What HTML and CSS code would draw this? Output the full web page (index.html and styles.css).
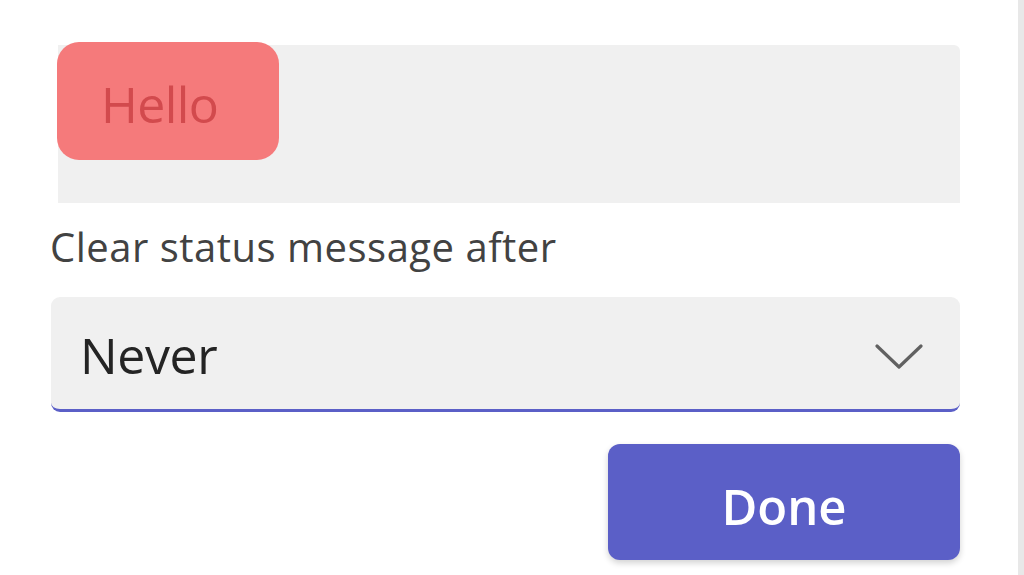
FILE: index.html
```html
<!DOCTYPE html>
<html lang="en">
<head>
<meta charset="utf-8">
<title>Status message</title>
<link rel="stylesheet" href="styles.css">
</head>
<body>
<div class="panel">
  <div class="content">
    <div class="message">
      <div class="highlight">Hello</div>
    </div>
    <div class="label">Clear status message after</div>
    <div class="select">
      <span class="select-value">Never</span>
      <svg class="chevron" width="48" height="26" viewBox="0 0 48 26"><path d="M2 2 L24 23 L46 2" fill="none" stroke="#616161" stroke-width="3.2" stroke-linecap="round" stroke-linejoin="round"/></svg>
    </div>
    <button class="done">Done</button>
  </div>
</div>
</body>
</html>
```
FILE: styles.css
```css
html, body {
  margin: 0;
  padding: 0;
  background: #ffffff;
  font-family: "Open Sans", "Noto Sans", sans-serif;
}
.panel {
  width: 1018px;
  height: 575px;
  border-right: 6px solid #e8e8e8;
  box-sizing: content-box;
  overflow: hidden;
}
.content {
  display: flex;
  flex-direction: column;
  padding: 45px 58px 0 51px;
  width: 909px;
}
.message {
  position: relative;
  margin-left: 7px;
  height: 158px;
  background: #f0f0f0;
  border-radius: 0 6px 0 0;
}
.highlight {
  position: absolute;
  left: -1px;
  top: -3px;
  width: 222px;
  height: 118px;
  box-sizing: border-box;
  padding: 6px 0 0 44px;
  display: flex;
  align-items: center;
  background: #f57a7b;
  border-radius: 22px;
  color: #d24a4d;
  font-size: 50px;
  letter-spacing: -0.6px;
}
.label {
  margin-top: 19px;
  margin-left: -1px;
  color: #424242;
  font-size: 40px;
  letter-spacing: 0.5px;
  line-height: 50px;
}
.select {
  margin-top: 25px;
  height: 115px;
  box-sizing: border-box;
  background: #f0f0f0;
  border-radius: 9px;
  border-bottom: 3px solid #5b5fc7;
  display: flex;
  align-items: center;
  justify-content: space-between;
  padding: 4px 37px 0 29px;
}
.select-value {
  color: #242424;
  font-size: 50px;
  letter-spacing: -0.4px;
}
.chevron {
  display: block;
  margin-top: 4px;
}
.done {
  align-self: flex-end;
  margin-top: 32px;
  width: 352px;
  height: 116px;
  border: none;
  border-radius: 12px;
  background: #5b5fc7;
  color: #ffffff;
  font-family: "Open Sans", "Noto Sans", sans-serif;
  font-weight: 600;
  font-size: 49px;
  padding: 8px 0 0 0;
  box-shadow: 0 3px 6px rgba(0, 0, 0, 0.18);
}
```
